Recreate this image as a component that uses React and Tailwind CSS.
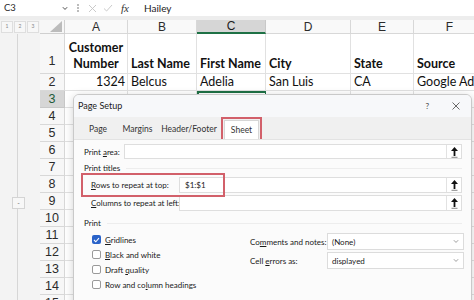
import React from 'react';

const cols = [
  { l: 'A', cls: 'w-[63px]' },
  { l: 'B', cls: 'w-[69px]' },
  { l: 'C', cls: 'w-[69px]', sel: true },
  { l: 'D', cls: 'w-[85px]' },
  { l: 'E', cls: 'w-[63px]' },
  { l: 'F', cls: 'w-[72px]' },
];

const row2 = [
  { t: '1324', right: true },
  { t: 'Belcus' },
  { t: 'Adelia' },
  { t: 'San Luis' },
  { t: 'CA' },
  { t: 'Google Ads' },
];

const row1 = ['Last Name', 'First Name', 'City', 'State', 'Source'];

function UpArrowBtn() {
  return (
    <div className="flex h-full w-[15px] items-center justify-center border-l border-[#e2e2e2] bg-white">
      <svg width="9" height="12" viewBox="0 0 9 12">
        <path d="M4.5 1 L8 5 L5.4 5 L5.4 10 L3.6 10 L3.6 5 L1 5 Z" fill="#111" />
        <rect x="1.5" y="10.8" width="6" height="0.9" fill="#777" />
      </svg>
    </div>
  );
}

function Chevron({ c = '#8a8a8a', w = 7 }) {
  return (
    <svg width={w} height="5" viewBox="0 0 7 5">
      <path d="M1 1 L3.5 3.6 L6 1" fill="none" stroke={c} strokeWidth="1.1" />
    </svg>
  );
}

function Check({ checked, children }) {
  return (
    <div className="flex h-[15px] items-center gap-[4px] whitespace-nowrap">
      {checked ? (
        <div className="flex h-[9px] w-[9px] items-center justify-center rounded-[2px] bg-[#2a63c9]">
          <svg width="7" height="6" viewBox="0 0 7 6">
            <path d="M1 3 L2.8 4.8 L6 1.2" fill="none" stroke="#fff" strokeWidth="1.1" />
          </svg>
        </div>
      ) : (
        <div className="h-[9px] w-[9px] rounded-[2px] border border-[#9a9a9a] bg-white" />
      )}
      <span>{children}</span>
    </div>
  );
}

function SelectBox({ value }) {
  return (
    <div className="flex h-[17px] w-[137px] shrink-0 items-center justify-between border border-[#dcdcdc] bg-white pl-[4px] pr-[4px]">
      <span>{value}</span>
      <Chevron c="#9a9a9a" w={6} />
    </div>
  );
}

export default function App() {
  const rowNums = [3, 4, 5, 6, 7, 8, 9, 10, 11, 12, 13, 14, 15];
  return (
    <div className="relative h-[300px] w-[474px] overflow-hidden bg-white" style={{ fontFamily: 'Lato, "Noto Sans", sans-serif' }}>
      {/* formula bar */}
      <div className="flex h-[16px] items-center bg-white text-[#2b2b2b]">
        <div className="flex h-full w-[72px] items-center justify-between pl-[4px] pr-[4px]">
          <span className="text-[9.5px]">C3</span>
          <Chevron c="#444" w={6} />
        </div>
        <div className="flex h-full w-[12px] items-center justify-center">
          <svg width="2" height="8" viewBox="0 0 2 8">
            <circle cx="1" cy="1" r="0.8" fill="#666" />
            <circle cx="1" cy="4" r="0.8" fill="#666" />
            <circle cx="1" cy="7" r="0.8" fill="#666" />
          </svg>
        </div>
        <div className="flex h-full w-[16px] items-center justify-center">
          <svg width="9" height="9" viewBox="0 0 9 9">
            <path d="M1 1 L8 8 M8 1 L1 8" stroke="#c4c4c4" strokeWidth="0.9" />
          </svg>
        </div>
        <div className="flex h-full w-[15px] items-center justify-center">
          <svg width="10" height="8" viewBox="0 0 10 8">
            <path d="M1 4.5 L3.6 7 L9 1" fill="none" stroke="#c4c4c4" strokeWidth="0.9" />
          </svg>
        </div>
        <div className="flex h-full w-[20px] items-center justify-center">
          <span className="text-[11px] italic text-[#333]" style={{ fontFamily: '"Liberation Serif", serif' }}>fx</span>
        </div>
        <div className="flex h-full flex-1 items-center pl-[9px] text-[10px] text-[#222]">Hailey</div>
      </div>
      <div className="h-[4px] bg-[#ededed]" />

      {/* grid */}
      <div className="flex">
        {/* outline gutter */}
        <div className="relative w-[40px] shrink-0 bg-[#f3f3f3]">
          <div className="flex h-[14px] items-center gap-[1px] pl-[1px]">
            {['1', '2', '3'].map((n) => (
              <div key={n} className="flex h-[12px] w-[12px] items-center justify-center border border-[#dedede] bg-[#f7f7f7] text-[5px] text-[#888]">
                {n}
              </div>
            ))}
          </div>
          <div className="ml-[17px] h-[270px] w-px bg-[#d6d6d6]" />
          <div className="absolute left-[12px] top-[177px] flex h-[12px] w-[13px] items-center justify-center border border-[#d4d4d4] bg-[#f7f7f7] text-[7px] text-[#777]">
            -
          </div>
        </div>

        <div className="flex shrink-0 flex-col">
          {/* header row */}
          <div className="flex h-[14px]" style={{ fontFamily: '"Liberation Sans", Arial, sans-serif' }}>
            <div className="flex w-[25px] shrink-0 items-end justify-end border-r border-b border-[#d0d0d0] bg-[#f7f7f7] pb-[1px] pr-[2px]">
              <svg width="12" height="11" viewBox="0 0 12 11">
                <path d="M12 0 L12 11 L0 11 Z" fill="#bcbcbc" />
              </svg>
            </div>
            {cols.map((c) => (
              <div
                key={c.l}
                className={`${c.cls} flex shrink-0 items-center justify-center text-[12px] ${
                  c.sel
                    ? 'border-r border-b-2 border-r-[#c8c8c8] border-b-[#1e7145] bg-[#d6d6d6] text-[#1b1b1b]'
                    : 'border-r border-b border-[#d8d8d8] bg-[#f9f9f9] text-[#2b2b2b]'
                }`}
              >
                {c.l}
              </div>
            ))}
          </div>

          {/* row 1 */}
          <div className="flex h-[40px] text-[12.5px] font-bold text-[#111]">
            <div className="flex w-[25px] shrink-0 items-end justify-center border-r border-b border-[#d8d8d8] bg-[#f7f7f7] pb-[2px] text-[12.5px] font-normal text-[#2b2b2b]" style={{ fontFamily: '"Liberation Sans", Arial, sans-serif' }}>
              1
            </div>
            <div className="flex w-[63px] shrink-0 flex-col items-center justify-end border-r border-b border-[#e1e1e1] pb-[1px] leading-[16px]">
              <span>Customer</span>
              <span>Number</span>
            </div>
            {row1.map((t, i) => (
              <div key={t} className={`${cols[i + 1].cls} flex shrink-0 items-end whitespace-nowrap border-r border-b border-[#e1e1e1] pb-[1px] pl-[3px] leading-[16px]`}>
                {t}
              </div>
            ))}
          </div>

          {/* row 2 */}
          <div className="flex h-[17px] text-[12.5px] text-[#111]">
            <div className="flex w-[25px] shrink-0 items-center justify-center border-r border-b border-[#d8d8d8] bg-[#f7f7f7] text-[12.5px] text-[#2b2b2b]" style={{ fontFamily: '"Liberation Sans", Arial, sans-serif' }}>
              2
            </div>
            {row2.map((c, i) => (
              <div
                key={c.t}
                className={`${cols[i].cls} flex shrink-0 items-center overflow-visible whitespace-nowrap border-r border-b border-[#e1e1e1] ${c.right ? 'justify-end pr-[2px]' : 'pl-[3px]'}`}
              >
                {c.t}
              </div>
            ))}
          </div>

          {/* rows 3+ */}
          {rowNums.map((n) => (
            <div key={n} className="flex h-[17px]">
              <div
                className={`flex w-[25px] shrink-0 items-center justify-center border-r border-b text-[12.5px] ${
                  n === 3 ? 'border-[#c8c8c8] bg-[#d6d6d6] text-[#1e5c38]' : 'border-[#d8d8d8] bg-[#f7f7f7] text-[#2b2b2b]'
                }`}
                style={{ fontFamily: '"Liberation Sans", Arial, sans-serif' }}
              >
                {n}
              </div>
              {cols.map((c) => (
                <div
                  key={c.l}
                  className={`${c.cls} shrink-0 border-r border-b ${
                    n === 3 && c.sel ? 'border-2 border-[#1e7145]' : 'border-[#e1e1e1]'
                  }`}
                />
              ))}
            </div>
          ))}
        </div>
      </div>

      {/* Page Setup dialog */}
      <div className="absolute left-[73px] top-[94px] flex h-[220px] w-[399px] flex-col overflow-hidden rounded-t-[6px] border border-[#c9c9c9] bg-[#f3f3f3] text-[8px] text-[#1a1a1a] shadow-[0_2px_10px_rgba(0,0,0,0.18)]">
        {/* title */}
        <div className="flex h-[22px] shrink-0 items-center justify-between bg-[#f7f8fa] pl-[4px] pr-[11px]">
          <span className="text-[9px]">Page Setup</span>
          <div className="flex items-center gap-[23px] text-[#444]">
            <span className="text-[8px]">?</span>
            <svg width="8" height="8" viewBox="0 0 8 8">
              <path d="M0.5 0.5 L7.5 7.5 M7.5 0.5 L0.5 7.5" stroke="#444" strokeWidth="0.8" />
            </svg>
          </div>
        </div>
        {/* tabs */}
        <div className="flex h-[22px] shrink-0 items-end bg-[#f0f0f0] pl-[7px] text-[8.5px] text-[#333]">
          <div className="flex h-[20px] w-[34px] items-center justify-center">Page</div>
          <div className="ml-[2px] flex h-[20px] w-[41px] items-center justify-center">Margins</div>
          <div className="ml-[1px] flex h-[20px] w-[60px] items-center justify-center whitespace-nowrap">Header/Footer</div>
          <div className="ml-[5px] flex h-[19px] w-[35px] items-center justify-center border border-b-0 border-[#d6d6d6] bg-white outline-2 outline-offset-[1px] outline-[#d2606a]">
            Sheet
          </div>
        </div>
        {/* panel */}
        <div className="flex flex-1 flex-col whitespace-nowrap border-t border-[#e3e3e3] bg-[#fbfbfb] pl-[10px] pr-[9px] pt-[4px]">
          <div className="flex h-[15px] items-center">
            <span className="w-[40px] shrink-0">
              Print <u>a</u>rea:
            </span>
            <div className="flex h-full flex-1 items-center justify-end border border-[#dedede] bg-white">
              <UpArrowBtn />
            </div>
          </div>
          <div className="mt-[3px] flex h-[12px] items-center gap-[6px]">
            <span>Print titles</span>
            <div className="h-px flex-1 bg-[#ededed]" />
          </div>
          <div className="relative mt-[3px] flex h-[16px] items-center pl-[7px]">
            <span className="w-[88px] shrink-0">
              <u>R</u>ows to repeat at top:
            </span>
            <div className="flex h-full flex-1 items-center justify-between border border-[#dedede] bg-white pl-[5px]">
              <span>$1:$1</span>
              <UpArrowBtn />
            </div>
            <div className="pointer-events-none absolute left-[-3px] top-[-4px] h-[24px] w-[144px] border-2 border-[#d2606a]" />
          </div>
          <div className="mt-[2px] flex h-[16px] items-center pl-[7px]">
            <span className="w-[88px] shrink-0">
              <u>C</u>olumns to repeat at left:
            </span>
            <div className="flex h-full flex-1 items-center justify-end border border-[#dedede] bg-white">
              <UpArrowBtn />
            </div>
          </div>
          <div className="mt-[5px] flex h-[14px] items-center gap-[6px]">
            <span>Print</span>
            <div className="h-px flex-1 bg-[#ededed]" />
          </div>
          <div className="mt-[2px] flex">
            <div className="flex w-[166px] shrink-0 flex-col pl-[8px]">
              <Check checked>
                <u>G</u>ridlines
              </Check>
              <Check>
                <u>B</u>lack and white
              </Check>
              <Check>
                Draft <u>q</u>uality
              </Check>
              <Check>
                Row and co<u>l</u>umn headings
              </Check>
            </div>
            <div className="flex flex-1 flex-col gap-[2px] pt-[1px]">
              <div className="flex items-center">
                <span className="w-[77px] shrink-0">
                  Co<u>m</u>ments and notes:
                </span>
                <SelectBox value="(None)" />
              </div>
              <div className="flex items-center">
                <span className="w-[77px] shrink-0">
                  Cell <u>e</u>rrors as:
                </span>
                <SelectBox value="displayed" />
              </div>
            </div>
          </div>
        </div>
      </div>
    </div>
  );
}
